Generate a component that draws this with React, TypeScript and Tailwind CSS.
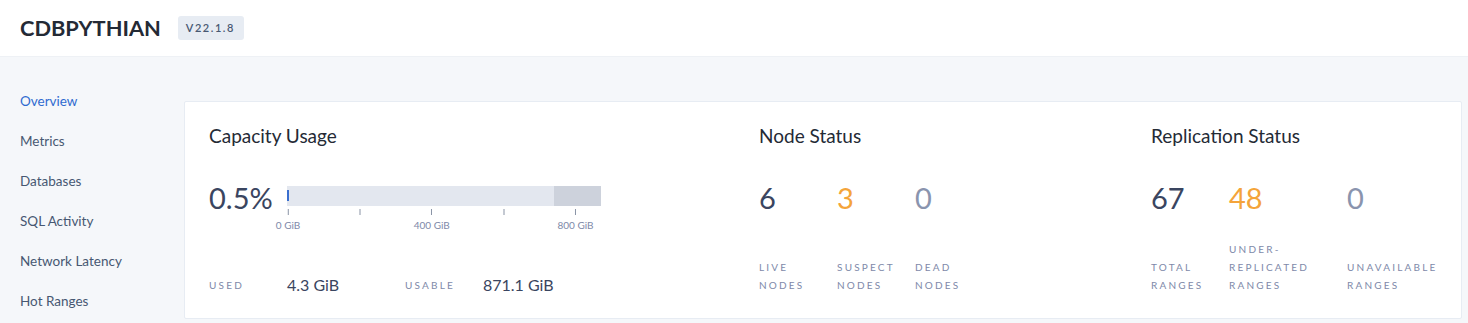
import React from "react";

const font = { fontFamily: "Lato, 'Noto Sans', sans-serif" };

function Label({ lines }: { lines: string[] }) {
  return (
    <div className="flex flex-col text-[10px] leading-[18px] tracking-[0.22em] text-[#7e89a9] uppercase">
      {lines.map((l) => (
        <span key={l}>{l}</span>
      ))}
    </div>
  );
}

function Stat({
  value,
  color,
  lines,
  w,
}: {
  value: string;
  color: string;
  lines: string[];
  w: string;
}) {
  return (
    <div className={`flex flex-col ${w}`}>
      <div className={`text-[29px] leading-[36px] h-[36px] ${color}`}>{value}</div>
      <div className="h-[78px] flex flex-col justify-end">
        <Label lines={lines} />
      </div>
    </div>
  );
}

export default function App() {
  const ticks = [0, 200, 400, 600, 800];
  const scale = 287.5 / 800;
  return (
    <div className="w-[1468px] h-[323px] bg-[#f5f7fa] flex flex-col overflow-hidden" style={font}>
      <header className="h-[57px] bg-white border-b border-[#eef1f5] flex items-center px-5 shrink-0">
        <div className="text-[21.8px] font-bold text-[#242a35]">CDBPYTHIAN</div>
        <div className="ml-[17px] h-[24px] pl-[8px] pr-[9px] rounded-[3px] bg-[#e7ecf3] flex items-center text-[11px] tracking-[0.14em] text-[#475872] font-semibold">
          V22.1.8
        </div>
      </header>
      <div className="flex flex-1">
        <nav className="w-[184px] shrink-0 pl-5 pt-[34px] flex flex-col gap-[20px] text-[13.5px] leading-[20px] text-[#475872]">
          <span className="text-[#2f6bd0]">Overview</span>
          <span>Metrics</span>
          <span>Databases</span>
          <span>SQL Activity</span>
          <span>Network Latency</span>
          <span>Hot Ranges</span>
        </nav>
        <div className="mt-[44px] mr-[6px] flex-1 h-[218px] bg-white border border-[#e7ecf3] rounded-[2px] pl-[24px] pt-[20px] flex">
          {/* Capacity */}
          <section className="w-[550px] flex flex-col">
            <h2 className="text-[19px] leading-[28px] text-[#242a35]">Capacity Usage</h2>
            <div className="mt-[30px] flex items-start">
              <div className="text-[29px] leading-[36px] text-[#3a4560] w-[78px]">0.5%</div>
              <div className="mt-[6px] flex flex-col w-[320px]">
                <div className="relative h-[20px] w-[314px] bg-[#e3e7ef]">
                  <div className="absolute right-0 top-0 h-full w-[47px] bg-[#cdd2dc]" />
                  <div className="absolute left-0 top-[4px] h-[11px] w-[2px] bg-[#3a6fcf]" />
                </div>
                <div className="relative h-[30px]">
                  {ticks.map((t) => (
                    <div
                      key={t}
                      className="absolute top-[3px] flex flex-col items-center -translate-x-1/2"
                      style={{ left: 1 + t * scale }}
                    >
                      <div className="w-px h-[6px] bg-[#8a94a6]" />
                      {t % 400 === 0 ? (
                        <span className="mt-[4px] text-[10px] leading-[12px] text-[#7e89a9] whitespace-nowrap">
                          {t} GiB
                        </span>
                      ) : null}
                    </div>
                  ))}
                </div>
              </div>
            </div>
            <div className="mt-[37px] flex items-center">
              <span className="w-[78px] text-[10px] tracking-[0.22em] text-[#7e89a9]">USED</span>
              <span className="w-[118px] text-[16px] text-[#3a4560]">4.3 GiB</span>
              <span className="w-[78px] text-[10px] tracking-[0.22em] text-[#7e89a9]">USABLE</span>
              <span className="text-[16px] text-[#3a4560]">871.1 GiB</span>
            </div>
          </section>
          {/* Node status */}
          <section className="w-[392px] flex flex-col">
            <h2 className="text-[19px] leading-[28px] text-[#242a35]">Node Status</h2>
            <div className="mt-[30px] flex">
              <Stat value="6" color="text-[#3a4560]" lines={["Live", "Nodes"]} w="w-[78px]" />
              <Stat value="3" color="text-[#f4a43a]" lines={["Suspect", "Nodes"]} w="w-[78px]" />
              <Stat value="0" color="text-[#8a94ae]" lines={["Dead", "Nodes"]} w="w-[78px]" />
            </div>
          </section>
          {/* Replication */}
          <section className="flex-1 flex flex-col">
            <h2 className="text-[19px] leading-[28px] text-[#242a35]">Replication Status</h2>
            <div className="mt-[30px] flex">
              <Stat value="67" color="text-[#3a4560]" lines={["Total", "Ranges"]} w="w-[78px]" />
              <Stat
                value="48"
                color="text-[#f4a43a]"
                lines={["Under-", "Replicated", "Ranges"]}
                w="w-[118px]"
              />
              <Stat value="0" color="text-[#8a94ae]" lines={["Unavailable", "Ranges"]} w="w-[100px]" />
            </div>
          </section>
        </div>
      </div>
    </div>
  );
}
